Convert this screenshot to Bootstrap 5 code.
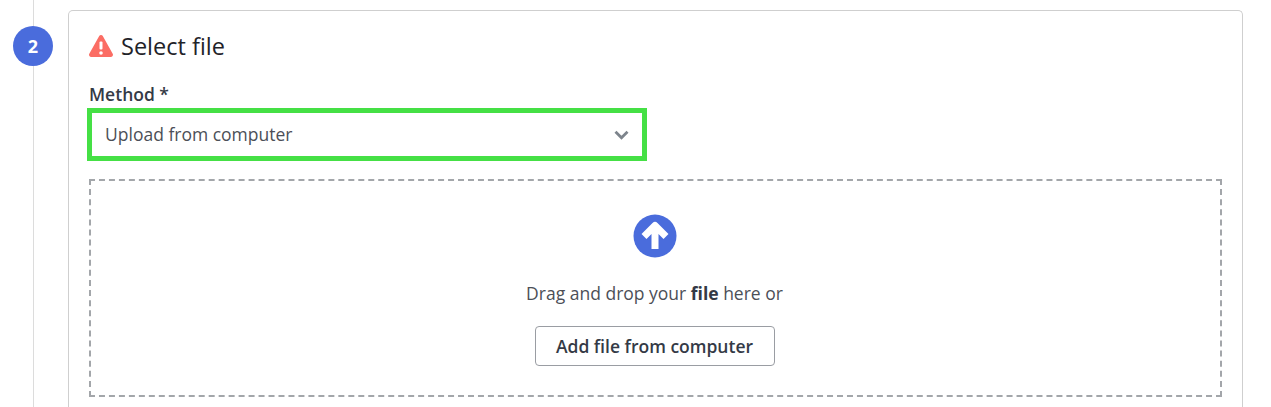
<!DOCTYPE html>
<html lang="en">
<head>
  <meta charset="UTF-8">
  <title>Select file</title>
  <meta name="viewport" content="width=device-width, initial-scale=1" />
  <link href="https://cdn.jsdelivr.net/npm/bootstrap@5.3.3/dist/css/bootstrap.min.css" rel="stylesheet">
  <script src="https://cdn.jsdelivr.net/npm/bootstrap@5.3.3/dist/js/bootstrap.bundle.min.js"></script>
  <style>
    html, body {
      height: 407px;
      overflow: hidden;
    }

    body {
      font-family: "Open Sans", sans-serif;
      color: #3a3f4b;
      background: #fff;
    }

    .step-rail {
      width: 68px;
      height: 407px;
      flex: none;
      padding-left: 13px;
    }

    .rail-top { height: 26px; }
    .rail-rest { flex: 1; }

    .rail-top, .rail-rest {
      width: 1px;
      margin-left: 20px;
      background: #dcdcdc;
    }

    .step-num {
      width: 40px;
      height: 40px;
      background: #4a6cdc;
      color: #fff;
      font-size: 18px;
      font-weight: 700;
    }

    .step-card {
      width: 1175px;
      height: 397px;
      flex: none;
      margin-top: 10px;
      padding: 20px;
      border: 1px solid #cfcfcf;
      border-bottom: 0;
      border-radius: 5px 5px 0 0;
    }

    .step-title {
      height: 30px;
      margin-bottom: 22px;
      font-size: 23.5px;
      font-weight: 400;
      color: #1f2329;
    }

    .method-label {
      margin-bottom: 3px;
      font-size: 17.5px;
      font-weight: 600;
      line-height: 22px;
      color: #343a46;
    }

    .method-box {
      width: 560px;
      height: 53px;
      margin-left: -2px;
      padding: 0 13px 0 13px;
      border: 5px solid #45e045;
      font-size: 17.5px;
      color: #4c4f57;
    }

    .drop-zone {
      width: 1133px;
      height: 218px;
      margin-top: 18px;
      padding: 33px 2px 0 0;
      border: 2px dashed #a3a6aa;
    }

    .drop-text {
      margin: 23px 0 21px;
      font-size: 17.5px;
      line-height: 24px;
      color: #4c4f57;
    }

    .drop-text b {
      font-weight: 700;
      color: #343a46;
    }

    .add-btn {
      width: 240px;
      height: 40px;
      padding: 0;
      border: 1px solid #9a9da3;
      border-radius: 4px;
      font-size: 17.5px;
      font-weight: 600;
      color: #343a46;
    }
  </style>
</head>
<body>

  <div class="d-flex">
    <div class="step-rail d-flex flex-column">
      <div class="rail-top"></div>
      <div class="step-num rounded-circle d-flex align-items-center justify-content-center">2</div>
      <div class="rail-rest"></div>
    </div>

    <div class="step-card bg-white">
      <h2 class="step-title d-flex align-items-center gap-2">
        <svg width="24" height="22" viewBox="0 0 24 22">
          <path fill="#fb6d64" d="M12 0c.8 0 1.400.4 1.800 1.100l9.900 17.600c.8 1.400-.2 3.300-1.800 3.300H2.100C.5 22-.5 20.100.3 18.700L10.200 1.100C10.600.4 11.200 0 12 0z"/>
          <rect x="10.500" y="6.500" width="3" height="8" rx="1" fill="#fff"/>
          <circle cx="12" cy="18" r="1.800" fill="#fff"/>
        </svg>
        <span>Select file</span>
      </h2>

      <div class="method-label">Method *</div>
      <div class="method-box d-flex align-items-center justify-content-between">
        <span>Upload from computer</span>
        <svg width="15" height="10" viewBox="0 0 15 10">
          <path d="M1.500 1.800 7.500 7.800 13.500 1.800" fill="none" stroke="#7d848c" stroke-width="2.800"/>
        </svg>
      </div>

      <div class="drop-zone text-center">
        <svg width="44" height="44" viewBox="0 0 44 44">
          <circle cx="22" cy="22" r="21.500" fill="#4a6cdc"/>
          <path d="M22 35V12M11 22.500 22 11.500l11 11" fill="none" stroke="#fff" stroke-width="7" stroke-linejoin="round"/>
        </svg>
        <p class="drop-text">Drag and drop your <b>file</b> here or</p>
        <button type="button" class="btn add-btn">Add file from computer</button>
      </div>
    </div>
  </div>

</body>
</html>
